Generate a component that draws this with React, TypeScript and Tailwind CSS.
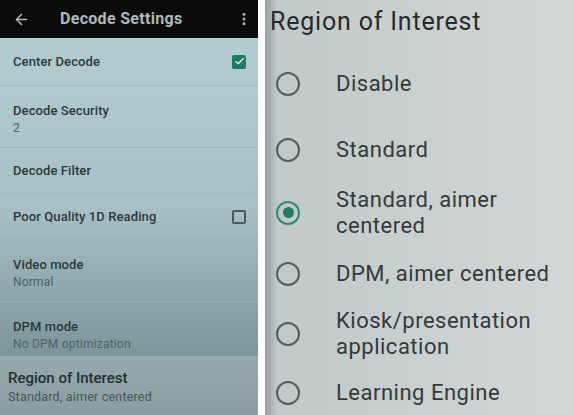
import { ArrowLeft, Check, EllipsisVertical } from 'lucide-react';

type Setting = {
  title: string;
  subtitle?: string;
  checkbox?: 'on' | 'off';
  height: string;
  pad?: string;
};

const settings: Setting[] = [
  { title: 'Center Decode', checkbox: 'on', height: 'h-[48px]' },
  { title: 'Decode Security', subtitle: '2', height: 'h-[62px]', pad: 'pt-[4px]' },
  { title: 'Decode Filter', height: 'h-[46px]' },
  { title: 'Poor Quality 1D Reading', checkbox: 'off', height: 'h-[46px]' },
  { title: 'Video mode', subtitle: 'Normal', height: 'h-[62px]', pad: 'pt-[4px]' },
  { title: 'DPM mode', subtitle: 'No DPM optimization', height: 'h-[55px]', pad: 'pt-[12px]' },
];

type Option = {
  label: string[];
  selected?: boolean;
  height: string;
};

const options: Option[] = [
  { label: ['Disable'], height: 'h-[68px]' },
  { label: ['Standard'], height: 'h-[64px]' },
  { label: ['Standard, aimer', 'centered'], selected: true, height: 'h-[61px]' },
  { label: ['DPM, aimer centered'], height: 'h-[62px]' },
  { label: ['Kiosk/presentation', 'application'], height: 'h-[58px]' },
  { label: ['Learning Engine'], height: 'h-[60px]' },
];

function SettingRow({ setting }: { setting: Setting }) {
  return (
    <div
      className={`flex ${setting.height} items-center justify-between border-b border-[#9db3b7]/70 pl-[13px] pr-[12px] ${
        setting.pad ?? ''
      }`}
    >
      <div className="flex flex-col">
        <span className="text-[13px] font-medium leading-[18px] tracking-[0.1px] text-[#2c393b]">
          {setting.title}
        </span>
        {setting.subtitle && (
          <span className="mt-[1px] text-[12px] leading-[15px] tracking-[0.2px] text-[#4f6163]">
            {setting.subtitle}
          </span>
        )}
      </div>
      {setting.checkbox === 'on' && (
        <span className="grid h-[14px] w-[14px] place-items-center rounded-[2px] bg-[#1f7a62]">
          <Check size={11} strokeWidth={3} className="text-[#e6f0ec]" />
        </span>
      )}
      {setting.checkbox === 'off' && (
        <span className="h-[14px] w-[14px] rounded-[2px] border-2 border-[#4d5a5c]" />
      )}
    </div>
  );
}

function Radio({ selected }: { selected?: boolean }) {
  if (selected) {
    return (
      <span className="grid h-[24px] w-[24px] shrink-0 place-items-center rounded-full border-[2.5px] border-[#2a8a72]">
        <span className="h-[11px] w-[11px] rounded-full bg-[#1d7c63]" />
      </span>
    );
  }
  return <span className="h-[24px] w-[24px] shrink-0 rounded-full border-[2.5px] border-[#565c5c]" />;
}

export default function App() {
  return (
    <div className="flex h-[415px] w-[573px] overflow-hidden bg-white font-['Roboto','Liberation_Sans',sans-serif]">
      <div className="flex w-[258px] flex-col bg-gradient-to-b from-[#b6cfd3] via-[#a6c0c4] to-[#6c8587]">
        <div className="flex h-[38px] shrink-0 items-center bg-[#0b0b0b] pl-[13px] pr-[6px] text-[#aebabc]">
          <ArrowLeft size={17} strokeWidth={2.2} />
          <span className="ml-[30px] flex-1 text-[16px] font-bold tracking-[0.3px]">
            Decode Settings
          </span>
          <EllipsisVertical size={16} strokeWidth={2.5} />
        </div>
        {settings.map((s) => (
          <SettingRow key={s.title} setting={s} />
        ))}
        <div className="flex flex-1 flex-col justify-center bg-gradient-to-b from-[#97a9aa] to-[#8a9d9e] pl-[8px]">
          <span className="text-[15px] font-medium leading-[20px] text-[#243030]">
            Region of Interest
          </span>
          <span className="text-[12.5px] leading-[17px] tracking-[0.2px] text-[#45575a]">
            Standard, aimer centered
          </span>
        </div>
      </div>

      <div className="ml-[7px] flex flex-1 flex-col bg-gradient-to-r from-[#97a1a1] via-[#c1c9c9] via-[4%] to-[#d2d8d7]">
        <div className="flex h-[50px] shrink-0 items-start pl-[5px] pt-[6px]">
          <span className="text-[25px] leading-[32px] tracking-[0.8px] text-[#262a2a]">
            Region of Interest
          </span>
        </div>
        {options.map((o) => (
          <div key={o.label.join(' ')} className={`flex ${o.height} shrink-0 items-center pl-[11px]`}>
            <Radio selected={o.selected} />
            <div className="ml-[36px] flex flex-col text-[22px] leading-[26px] tracking-[0.5px] text-[#343939]">
              {o.label.map((line) => (
                <span key={line}>{line}</span>
              ))}
            </div>
          </div>
        ))}
      </div>
    </div>
  );
}
